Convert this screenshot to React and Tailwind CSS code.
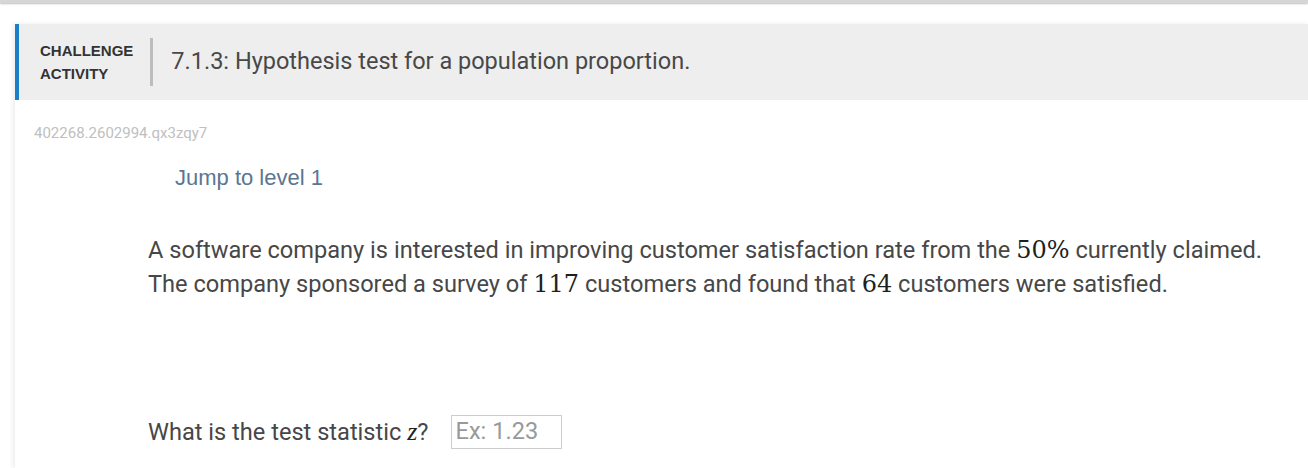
export default function App() {
  const math = { fontFamily: '"DejaVu Serif", "Liberation Serif", serif' };
  return (
    <div className="relative h-[468px] w-[1308px] overflow-hidden bg-white" style={{ fontFamily: 'Roboto, "Liberation Sans", sans-serif' }}>
      <div className="h-[3px] w-full bg-[#d6d6d6] shadow-[0_1px_2px_rgba(0,0,0,0.25)]" />
      <div className="ml-[15px] mt-[21px] min-h-[444px] shadow-[-2px_0_5px_rgba(0,0,0,0.08)]">
        <div className="flex h-[76px] items-center border-l-4 border-[#1a7fc9] bg-[#eeeeee]">
          <div className="pl-[21px] pr-[17px] text-[15px] font-bold leading-[23px] text-[#333]" style={{ fontFamily: '"Liberation Sans", Arial, sans-serif' }}>
            <div>CHALLENGE</div>
            <div>ACTIVITY</div>
          </div>
          <div className="h-[48px] w-[3px] bg-[#bdbdbd]" />
          <div className="pl-[18px] text-[23.5px] text-[#484848]">7.1.3: Hypothesis test for a population proportion.</div>
        </div>
        <div className="pl-[19px] pt-[25px] text-[15px] leading-[16px] text-[#c0c0c0]">402268.2602994.qx3zqy7</div>
        <div className="pl-[160px] pt-[23px] text-[22px] leading-[28px] text-[#5b7690]" style={{ fontFamily: '"Liberation Sans", Arial, sans-serif' }}>Jump to level 1</div>
        <div className="pl-[133px] pt-[41px] text-[23.6px] leading-[34px] text-[#474747]">
          <div>
            A software company is interested in improving customer satisfaction rate from the <span className="text-[24px] text-[#1f1f1f]" style={math}>50%</span> currently claimed.
          </div>
          <div>
            The company sponsored a survey of <span className="text-[24px] text-[#1f1f1f]" style={math}>117</span> customers and found that <span className="text-[24px] text-[#1f1f1f]" style={math}>64</span> customers were satisfied.
          </div>
        </div>
        <div className="flex items-center pl-[133px] pt-[114px]">
          <span className="text-[23.6px] leading-[34px] text-[#474747]">
            What is the test statistic <span className="italic text-[26px] text-[#222]" style={{ fontFamily: '"Liberation Serif", serif' }}>z</span>?
          </span>
          <div className="ml-[23px] flex h-[34px] w-[111px] items-center border border-[#cccccc] px-[3px] text-[23.6px] text-[#999]">Ex: 1.23</div>
        </div>
      </div>
    </div>
  );
}
